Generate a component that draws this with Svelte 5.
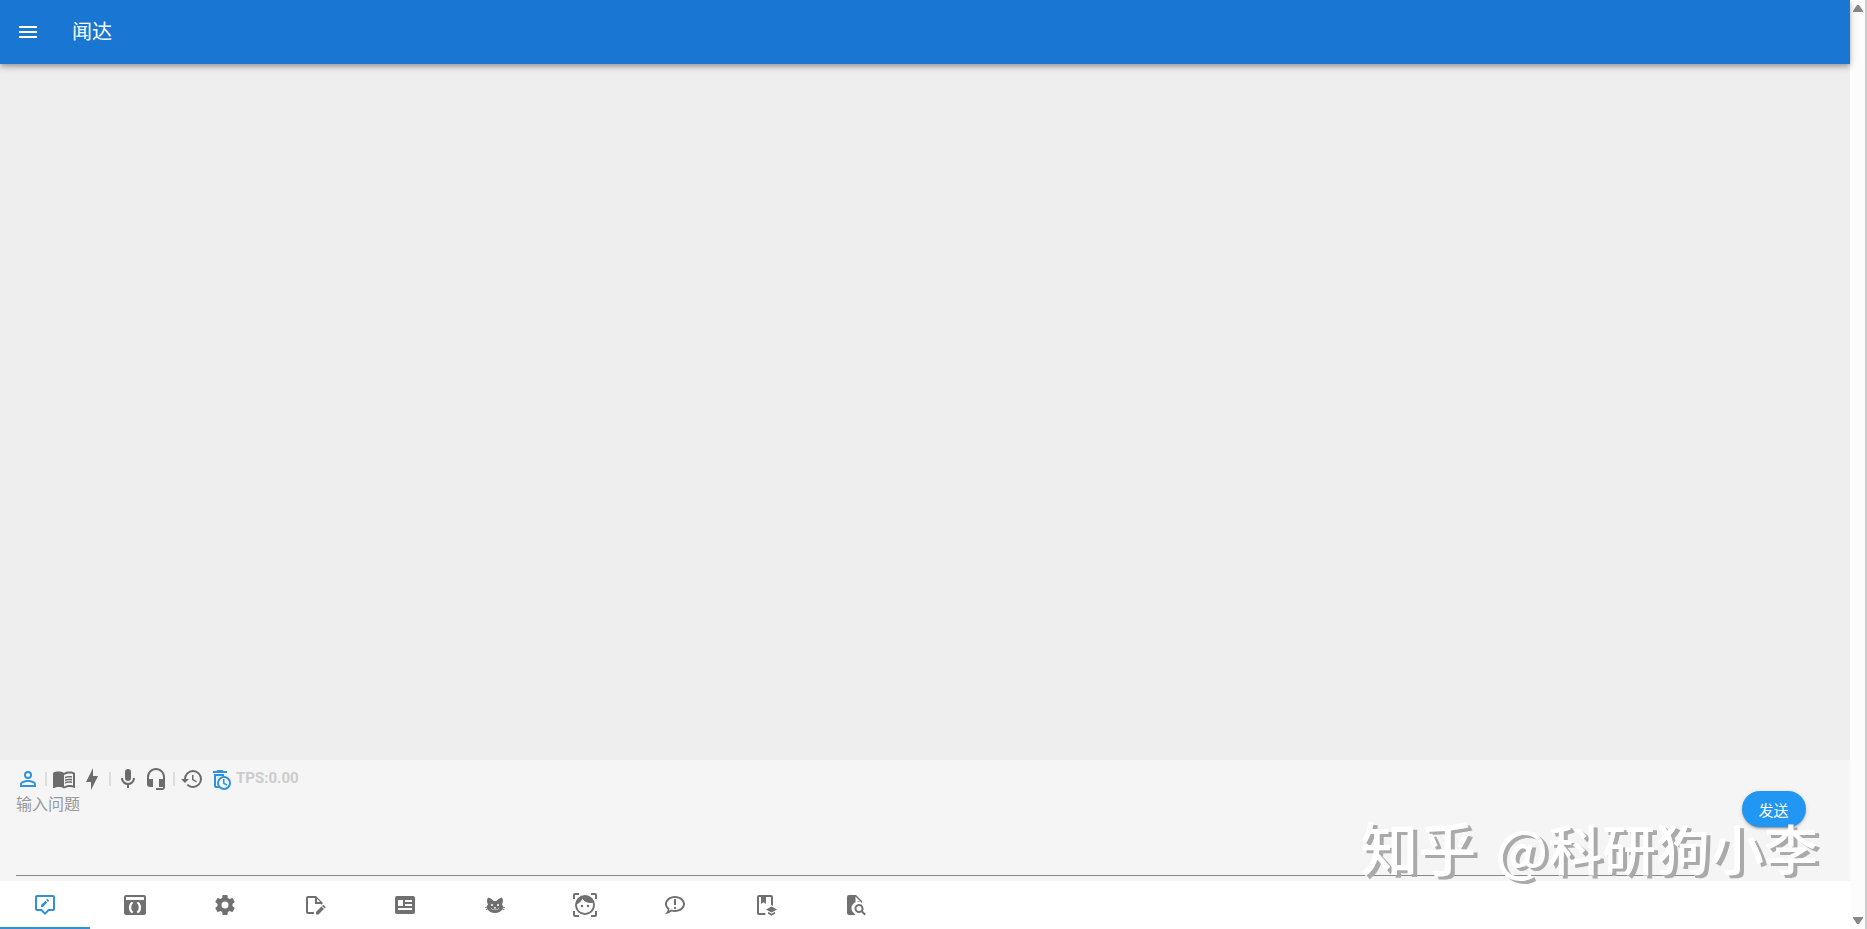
<script>
  let question = $state('');
  let active = $state(0);

  const tools = [
    { name: '角色', on: true, d: 'M12,4A4,4 0 0,1 16,8A4,4 0 0,1 12,12A4,4 0 0,1 8,8A4,4 0 0,1 12,4M12,5.9A2.1,2.1 0 0,0 9.9,8A2.1,2.1 0 0,0 12,10.1A2.1,2.1 0 0,0 14.1,8A2.1,2.1 0 0,0 12,5.9M12,13C14.67,13 20,14.33 20,17V20H4V17C4,14.33 9.33,13 12,13M12,14.9C9.03,14.9 5.9,16.36 5.9,17V18.1H18.1V17C18.1,16.36 14.97,14.9 12,14.9Z', sep: true },
    { name: '知识库', d: 'M21 5c-1.11-.35-2.33-.5-3.5-.5-1.95 0-4.05.4-5.5 1.5-1.45-1.1-3.55-1.5-5.5-1.5S2.45 4.9 1 6v14.65c0 .25.25.5.5.5.1 0 .15-.05.25-.05C3.1 20.45 5.05 20 6.5 20c1.95 0 4.05.4 5.5 1.5 1.35-.85 3.8-1.5 5.5-1.5 1.65 0 3.35.3 4.75 1.05.1.05.15.05.25.05.25 0 .5-.25.5-.5V6c-.6-.45-1.25-.75-2-1zm0 13.5c-1.1-.35-2.3-.5-3.5-.5-1.7 0-4.15.65-5.5 1.5V8c1.35-.85 3.8-1.5 5.5-1.5 1.2 0 2.4.15 3.5.5v11.5zM17.5 10.5c.88 0 1.73.09 2.5.26V9.24c-.79-.15-1.64-.24-2.5-.24-1.7 0-3.24.29-4.5.83v1.66c1.13-.64 2.7-.99 4.5-.99zM13 12.49v1.66c1.13-.64 2.7-.99 4.5-.99.88 0 1.73.09 2.5.26V11.9c-.79-.15-1.64-.24-2.5-.24-1.7 0-3.24.3-4.5.83zM17.5 14.33c-1.7 0-3.24.29-4.5.83v1.66c1.13-.64 2.7-.99 4.5-.99.88 0 1.73.09 2.5.26v-1.52c-.79-.16-1.64-.24-2.5-.24z' },
    { name: '快速', d: 'M11 15H6L13 1V9H18L11 23V15Z', sep: true },
    { name: '语音输入', d: 'M12,2A3,3 0 0,1 15,5V11A3,3 0 0,1 12,14A3,3 0 0,1 9,11V5A3,3 0 0,1 12,2M19,11C19,14.53 16.39,17.44 13,17.93V21H11V17.93C7.61,17.44 5,14.53 5,11H7A5,5 0 0,0 12,16A5,5 0 0,0 17,11H19Z' },
    { name: '朗读', d: 'M12,1C7,1 3,5 3,10V17A3,3 0 0,0 6,20H9V12H5V10A7,7 0 0,1 12,3A7,7 0 0,1 19,10V12H15V20H19V21H12V23H18A3,3 0 0,0 21,20V10C21,5 16.97,1 12,1Z', sep: true },
    { name: '历史', d: 'M13.5,8H12V13L16.28,15.54L17,14.33L13.5,12.25V8M13,3A9,9 0 0,0 4,12H1L4.96,16.03L9,12H6A7,7 0 0,1 13,5A7,7 0 0,1 20,12A7,7 0 0,1 13,19C11.07,19 9.32,18.21 8.06,16.94L6.64,18.36C8.27,20 10.5,21 13,21A9,9 0 0,0 22,12A9,9 0 0,0 13,3' },
    { name: '清除历史', on: true, d: 'M15.5 4L14.5 3H9.5L8.5 4H5V6H19V4ZM6 7V19C6 20.1 6.9 21 8 21H11.1A7 7 0 0 1 9.7 19H8V9H16V7ZM16 9A7 7 0 1 0 16 23A7 7 0 1 0 16 9ZM16 11A5 5 0 1 1 16 21A5 5 0 1 1 16 11ZM15 12V16.7L18.6 18.8L19.4 17.5L16.5 15.8V12Z' }
  ];

  const tabs = [
    { name: '对话', d: 'M20 2H4C2.89 2 2 2.89 2 4V16C2 17.1 2.9 18 4 18H8L12 22L16 18H20C21.1 18 22 17.1 22 16V4C22 2.9 21.1 2 20 2ZM4 4H20V16H15.17L12 19.17L8.83 16H4ZM8 12.1V14H9.9L14.3 9.6L12.4 7.7ZM13.1 7L15 8.9L15.9 8C16.1 7.8 16.1 7.5 15.9 7.3L14.7 6.1C14.5 5.9 14.2 5.9 14 6.1Z' },
    { name: '代码', d: 'M3 2H21A2 2 0 0 1 23 4V20A2 2 0 0 1 21 22H3A2 2 0 0 1 1 20V4A2 2 0 0 1 3 2ZM3 4V7H21V4ZM8.9 8.7C4.9 11 4.9 18 8.9 20.3L10.4 18.9C7.6 17 7.6 12 10.4 10.1ZM15.1 8.7L13.6 10.1C16.4 12 16.4 17 13.6 18.9L15.1 20.3C19.1 18 19.1 11 15.1 8.7Z' },
    { name: '设置', d: 'M12,15.5A3.5,3.5 0 0,1 8.5,12A3.5,3.5 0 0,1 12,8.5A3.5,3.5 0 0,1 15.5,12A3.5,3.5 0 0,1 12,15.5M19.43,12.97C19.47,12.65 19.5,12.33 19.5,12C19.5,11.67 19.47,11.34 19.43,11L21.54,9.37C21.73,9.22 21.78,8.95 21.66,8.73L19.66,5.27C19.54,5.05 19.27,4.96 19.05,5.05L16.56,6.05C16.04,5.66 15.5,5.32 14.87,5.07L14.5,2.42C14.46,2.18 14.25,2 14,2H10C9.75,2 9.54,2.18 9.5,2.42L9.13,5.07C8.5,5.32 7.96,5.66 7.44,6.05L4.95,5.05C4.73,4.96 4.46,5.05 4.34,5.27L2.34,8.73C2.21,8.95 2.27,9.22 2.46,9.37L4.57,11C4.53,11.34 4.5,11.67 4.5,12C4.5,12.33 4.53,12.65 4.57,12.97L2.46,14.63C2.27,14.78 2.21,15.05 2.34,15.27L4.34,18.73C4.46,18.95 4.73,19.03 4.95,18.95L7.44,17.94C7.96,18.34 8.5,18.68 9.13,18.93L9.5,21.58C9.54,21.82 9.75,22 10,22H14C14.25,22 14.46,21.82 14.5,21.58L14.87,18.93C15.5,18.67 16.04,18.34 16.56,17.94L19.05,18.95C19.27,19.03 19.54,18.95 19.66,18.73L21.66,15.27C21.78,15.05 21.73,14.78 21.54,14.63L19.43,12.97Z' },
    { name: '写作', d: 'M5 3A2 2 0 0 0 3 5V19A2 2 0 0 0 5 21H11V19H5V5H12V11H18V12L20 10L13 3ZM14 5.8L17.2 9H14ZM20.3 11.7L22.8 14.2L21.6 15.4L19.1 12.9ZM18.4 13.6L20.9 16.1L15.5 21.5H13V19Z' },
    { name: '新闻', d: 'M4 3H20A2 2 0 0 1 22 5V19A2 2 0 0 1 20 21H4A2 2 0 0 1 2 19V5A2 2 0 0 1 4 3ZM5 7V13H10V7ZM12 7V9H19V7ZM12 11V13H19V11ZM5 15V17H19V15Z' },
    { name: '猫娘', d: 'M12,8L10.67,8.09C9.81,7.07 7.4,4.5 5,4.5C5,4.5 3.03,7.46 4.96,11.41C4.41,12.24 4.07,12.67 4,13.66L2.07,13.95L2.28,14.93L4.04,14.67L4.18,15.38L2.61,16.32L3.08,17.21L4.53,16.32C5.68,18.76 8.59,20 12,20C15.41,20 18.32,18.76 19.47,16.32L20.92,17.21L21.39,16.32L19.82,15.38L19.96,14.67L21.72,14.93L21.93,13.95L20,13.66C19.93,12.67 19.59,12.24 19.04,11.41C20.97,7.46 19,4.5 19,4.5C16.6,4.5 14.19,7.07 13.33,8.09L12,8M9,11A1,1 0 0,1 10,12A1,1 0 0,1 9,13A1,1 0 0,1 8,12A1,1 0 0,1 9,11M15,11A1,1 0 0,1 16,12A1,1 0 0,1 15,13A1,1 0 0,1 14,12A1,1 0 0,1 15,11M11,14H13L12.3,15.39C12.5,16.03 13.06,16.5 13.75,16.5A1.5,1.5 0 0,0 15.25,15H15.75A2,2 0 0,1 13.75,17C13,17 12.35,16.59 12,16C11.65,16.59 11,17 10.25,17A2,2 0 0,1 8.25,15H8.75A1.5,1.5 0 0,0 10.25,16.5C10.94,16.5 11.5,16.03 11.7,15.39L11,14Z' },
    { name: '形象', d: 'M9,11.75A1.25,1.25 0 0,0 7.75,13A1.25,1.25 0 0,0 9,14.25A1.25,1.25 0 0,0 10.25,13A1.25,1.25 0 0,0 9,11.75M15,11.75A1.25,1.25 0 0,0 13.75,13A1.25,1.25 0 0,0 15,14.25A1.25,1.25 0 0,0 16.25,13A1.25,1.25 0 0,0 15,11.75M12,2A10,10 0 0,0 2,12A10,10 0 0,0 12,22A10,10 0 0,0 22,12A10,10 0 0,0 12,2M12,20C7.59,20 4,16.41 4,12C4,11.71 4,11.42 4.05,11.14C6.41,10.09 8.28,8.16 9.26,5.77C11.07,8.33 14.05,10 17.42,10C18.2,10 18.95,9.91 19.67,9.74C19.88,10.45 20,11.21 20,12C20,16.41 16.41,20 12,20M0,2A2,2 0 0,1 2,0H6V2H2V6H0V2M24,22A2,2 0 0,1 22,24H18V22H22V18H24V22M2,24A2,2 0 0,1 0,22V18H2V22H6V24H2M22,0A2,2 0 0,1 24,2V6H22V2H18V0H22Z' },
    { name: '提示', d: 'M12,3C17.5,3 22,6.58 22,11C22,15.42 17.5,19 12,19C10.76,19 9.57,18.82 8.47,18.5C5.55,21 2,21 2,21C4.33,18.67 4.7,17.1 4.75,16.5C3.05,15.07 2,13.13 2,11C2,6.58 6.5,3 12,3M11,14V16H13V14H11M11,12H13V6H11V12M12,5C7.58,5 4,7.69 4,11C4,12.72 4.93,14.2 6.5,15.3C6.5,16 6.4,16.7 5.9,17.8C6.7,17.5 7.3,17 7.9,16.4C9.1,16.8 10.5,17 12,17C16.42,17 20,14.31 20,11C20,7.69 16.42,5 12,5Z' },
    { name: '学习', d: 'M6 2H18A2 2 0 0 1 20 4V12.8L18 12V4H13V11L10.5 9.2L8 11V4H6V20H12.3V22H6A2 2 0 0 1 4 20V4A2 2 0 0 1 6 2ZM18.5 13.5L24 16.5L18.5 19.5L13 16.5ZM15 18.8L18.5 20.7L22 18.8V20.8L18.5 22.7L15 20.8Z' },
    { name: '检索', d: 'M6 2H13L19 8V10A6.5 6.5 0 0 0 11 20.3L12.5 22H6A2 2 0 0 1 4 20V4A2 2 0 0 1 6 2ZM12.5 3.5V9H18ZM16 11A4.5 4.5 0 1 0 18.4 19.3L21.5 22.4L22.9 21L19.8 17.9A4.5 4.5 0 0 0 16 11ZM16 13A2.5 2.5 0 1 1 16 18A2.5 2.5 0 1 1 16 13Z' }
  ];
</script>

{#snippet icon(d)}
  <svg viewBox="0 0 24 24" width="24" height="24" aria-hidden="true"><path fill-rule="evenodd" {d} /></svg>
{/snippet}

<div class="window">
  <div class="app">
    <header>
      <button class="menu" aria-label="菜单">{@render icon('M3 6H21V8H3ZM3 11H21V13H3ZM3 16H21V18H3Z')}</button>
      <h1>闻达</h1>
    </header>
    <main></main>
    <section class="composer">
      <div class="tools">
        {#each tools as t}
          <button class="tool" class:on={t.on} aria-label={t.name}>{@render icon(t.d)}</button>
          {#if t.sep}<span class="sep"></span>{/if}
        {/each}
        <span class="tps">TPS:0.00</span>
      </div>
      <div class="entry">
        <textarea aria-label="输入问题" placeholder="输入问题" bind:value={question}></textarea>
        <div class="action"><button class="send">发送</button></div>
      </div>
    </section>
    <nav>
      {#each tabs as t, i}
        <button class="tab" class:active={active === i} aria-label={t.name} onclick={() => (active = i)}>{@render icon(t.d)}</button>
      {/each}
    </nav>
  </div>
  <div class="scrollbar" aria-hidden="true">
    <svg viewBox="0 0 10 7" width="10" height="7"><path d="M4 0H6L10 6V7H0V6Z" /></svg>
    <svg viewBox="0 0 10 7" width="10" height="7"><path d="M4 7H6L10 1V0H0V1Z" /></svg>
  </div>
  <div class="watermark"><span class="brand">知乎</span> @科研狗小李</div>
</div>

<style>
  :global(body) { margin: 0; }
  .window {
    position: relative;
    display: flex;
    height: 100vh;
    overflow: hidden;
    font-family: Roboto, "Noto Sans CJK SC", sans-serif;
    background: #fff;
  }
  .app { flex: 1; min-width: 0; display: flex; flex-direction: column; }
  button { border: 0; padding: 0; margin: 0; background: none; color: inherit; font: inherit; cursor: pointer; }
  svg { display: block; fill: currentColor; }
  header {
    position: relative;
    display: flex;
    align-items: center;
    gap: 32px;
    height: 64px;
    box-sizing: border-box;
    padding: 0 16px;
    background: #1976d2;
    color: #fff;
    box-shadow: 0 2px 4px -1px rgba(0,0,0,.2), 0 4px 5px rgba(0,0,0,.14), 0 1px 10px rgba(0,0,0,.12);
  }
  h1 { margin: 0; font-size: 20px; line-height: 32px; font-weight: 400; }
  main { flex: 1; background: #eee; }
  .composer { background: #f5f5f5; padding: 7px 0 5px; }
  .tools { display: flex; align-items: center; gap: 4px; height: 24px; padding: 0 16px; color: #6c6c6c; }
  .on { color: #2f92dc; }
  .sep { width: 2px; height: 14px; margin: 0 1px; background: #ddd; }
  .tps { align-self: flex-start; color: #ccc; font-size: 15px; line-height: 22px; font-weight: 700; }
  .entry { display: flex; }
  textarea {
    flex: 11;
    box-sizing: border-box;
    height: 85px;
    margin: 0 0 0 16px;
    padding: 2px 0 0;
    border: 0;
    border-bottom: 1px solid #888;
    outline: 0;
    resize: none;
    background: none;
    color: #222;
    font: 16px/24px Roboto, "Noto Sans CJK SC", sans-serif;
  }
  textarea::placeholder { color: #999; opacity: 1; }
  .action { flex: 1; display: flex; justify-content: center; align-items: flex-start; }
  .send {
    width: 64px;
    height: 36px;
    border-radius: 18px;
    background: #2196f3;
    color: #fff;
    font-size: 15px;
    box-shadow: 0 3px 1px -2px rgba(0,0,0,.2), 0 2px 2px rgba(0,0,0,.14), 0 1px 5px rgba(0,0,0,.12);
  }
  nav { display: flex; height: 48px; background: #fff; color: #707070; }
  .tab { box-sizing: border-box; width: 90px; height: 48px; border-bottom: 2px solid transparent; border-top: 2px solid transparent; display: flex; align-items: center; justify-content: center; }
  .active { color: #3490d4; border-bottom-color: #3490d4; }
  .scrollbar {
    box-sizing: border-box;
    width: 17px;
    padding: 5px 3px;
    display: flex;
    flex-direction: column;
    justify-content: space-between;
    align-items: center;
    background: #fcfcfc;
    border-right: 2px solid #ccc;
    color: #888;
  }
  .watermark {
    position: absolute;
    right: 49px;
    bottom: 45px;
    color: #fff;
    font: 500 54px/72px "Noto Sans CJK SC", sans-serif;
    white-space: nowrap;
    text-shadow: 4px 3px 0 #aaa;
    pointer-events: none;
  }
  .brand { margin-right: 7px; font-size: 58px; line-height: 1; }
</style>
